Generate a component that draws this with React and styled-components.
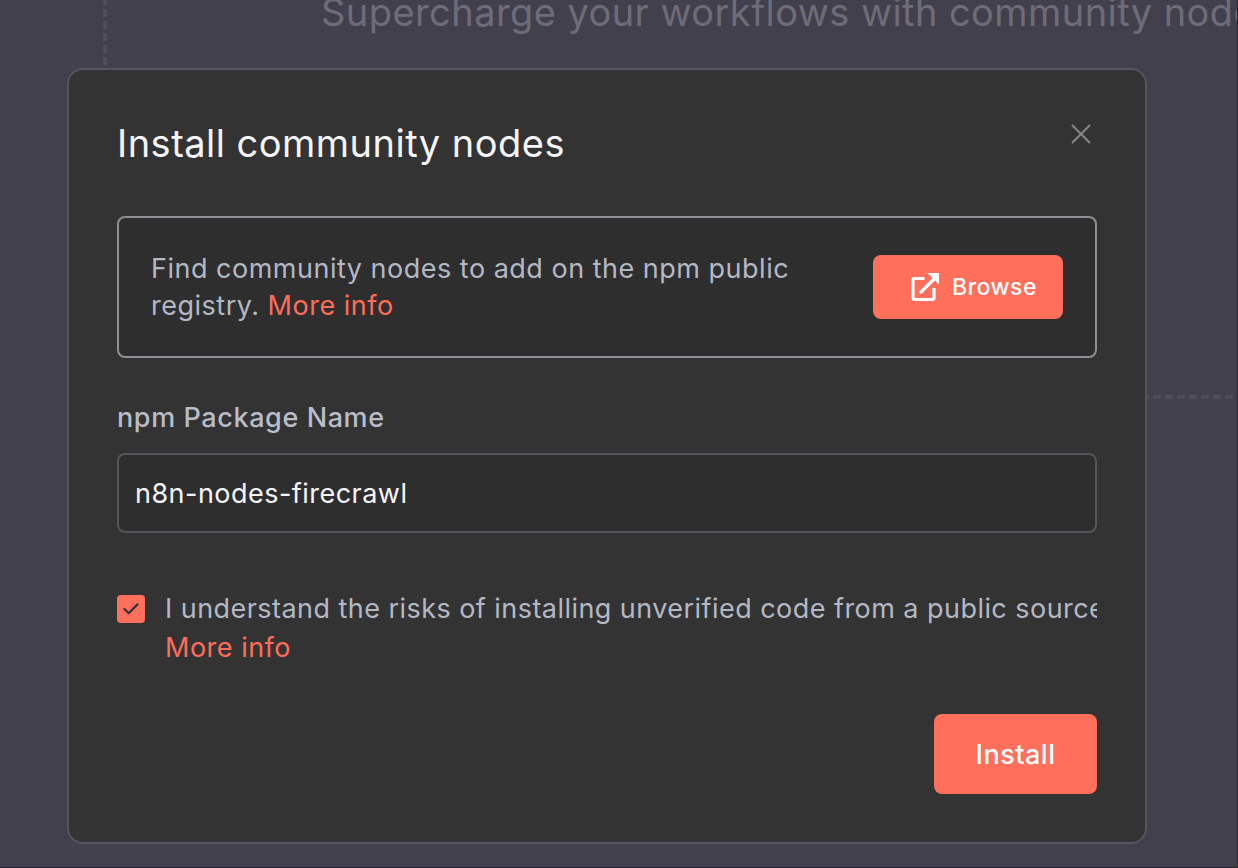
import styled, { createGlobalStyle } from 'styled-components';

const GlobalStyle = createGlobalStyle`
    html, body {
        margin: 0;
        padding: 0;
        height: 100%;
        background: #42404c;
        font-family: Inter, "Liberation Sans", sans-serif;
    }
`;

const Page = styled.div`
    position: relative;
    width: 1238px;
    height: 868px;
    overflow: hidden;
    box-sizing: border-box;
    background: #42404c;
    border-right: 1px solid #26252c;
    border-bottom: 1px solid #26252c;
    padding: 68px 0 0 67px;
`;

const Tagline = styled.div`
    position: absolute;
    left: 321px;
    top: -13px;
    font-size: 38px;
    line-height: 50px;
    letter-spacing: 0.43px;
    color: #6d6c78;
    white-space: nowrap;
`;

const VerticalDash = styled.div`
    position: absolute;
    left: 103px;
    top: -3px;
    width: 4px;
    height: 69px;
    background: repeating-linear-gradient(to bottom, #4e4d5a 0 8px, transparent 8px 12px);
`;

const HorizontalDash = styled.div`
    position: absolute;
    left: 1141px;
    top: 395px;
    width: 97px;
    height: 4px;
    background: repeating-linear-gradient(to right, #4e4d5a 0 8px, transparent 8px 12px);
`;

const Modal = styled.div`
    position: relative;
    box-sizing: border-box;
    width: 1080px;
    height: 776px;
    padding: 48px;
    background: #333333;
    border: 2px solid #55555b;
    border-radius: 16px;
    display: flex;
    flex-direction: column;
`;

const Header = styled.div`
    display: flex;
    align-items: flex-start;
    justify-content: space-between;
    height: 98px;
`;

const Title = styled.h2`
    margin: 0;
    font-size: 38px;
    font-weight: 400;
    line-height: 50px;
    letter-spacing: 0.48px;
    color: #f5f5f9;
`;

const CloseButton = styled.button`
    position: absolute;
    top: 52px;
    right: 52px;
    width: 24px;
    height: 24px;
    padding: 0;
    border: none;
    background: none;
    color: #85858a;
    cursor: pointer;
`;

const InfoBox = styled.div`
    box-sizing: border-box;
    height: 143px;
    padding: 0 32px;
    display: flex;
    align-items: center;
    justify-content: space-between;
    background: #2e2e2e;
    border: 2px solid #8c8f94;
    border-radius: 8px;
`;

const InfoText = styled.p`
    margin: 0;
    width: 660px;
    font-size: 27px;
    line-height: 37px;
    letter-spacing: 0.5px;
    color: #b3b8c5;
`;

const Link = styled.a`
    color: #ff6d5a;
    text-decoration: none;
    letter-spacing: 0.5px;
`;

const BrowseButton = styled.button`
    box-sizing: border-box;
    width: 190px;
    height: 64px;
    padding: 0 0 0 12px;
    display: flex;
    align-items: center;
    justify-content: center;
    gap: 13px;
    border: none;
    border-radius: 8px;
    background: #ff6f5c;
    color: #fff;
    font-family: inherit;
    font-size: 23px;
    font-weight: 500;
    letter-spacing: 0.5px;
    cursor: pointer;
`;

const Label = styled.label`
    display: block;
    margin-top: 41px;
    font-size: 27px;
    font-weight: 500;
    line-height: 37px;
    letter-spacing: 0.6px;
    color: #b9bdc9;
`;

const Input = styled.input`
    display: block;
    box-sizing: border-box;
    width: 100%;
    height: 80px;
    margin-top: 17px;
    padding: 0 16px;
    background: #2e2e2e;
    border: 2px solid #55555b;
    border-radius: 8px;
    outline: none;
    color: #f5f5f9;
    font-family: inherit;
    font-size: 27px;
    letter-spacing: 0.47px;
`;

const Consent = styled.div`
    display: flex;
    align-items: flex-start;
    gap: 20px;
    margin-top: 56px;
`;

const CheckBox = styled.span`
    flex: none;
    display: flex;
    align-items: center;
    justify-content: center;
    width: 28px;
    height: 28px;
    margin-top: 6px;
    border-radius: 4px;
    background: #ff6f5c;
    color: #333;
`;

const ConsentText = styled.div`
    flex: 1;
    min-width: 0;
    overflow: hidden;
    font-size: 27px;
    line-height: 39px;
    letter-spacing: 0.45px;
    color: #b3b8c5;
`;

const ConsentLine = styled.div`
    white-space: nowrap;
`;

const Footer = styled.div`
    display: flex;
    justify-content: flex-end;
    margin-top: 47px;
`;

const InstallButton = styled.button`
    width: 163px;
    height: 80px;
    border: none;
    border-radius: 8px;
    background: #ff6f5c;
    color: #fff;
    font-family: inherit;
    font-size: 27px;
    font-weight: 500;
    letter-spacing: 0.5px;
    cursor: pointer;
`;

function ExternalIcon() {
    return (
        <svg width="28" height="28" viewBox="0 0 28 28" fill="none" stroke="currentColor" strokeWidth="3.2">
            <path d="M13.5 5.5H3.5a1.5 1.5 0 0 0-1.5 1.5v18a1.5 1.5 0 0 0 1.5 1.5h18a1.5 1.5 0 0 0 1.5-1.5V15" />
            <path d="M10 19L24 5" strokeLinecap="round" strokeWidth="3.4" />
            <path d="M16.5 0H28v11.5z" fill="currentColor" stroke="none" />
        </svg>
    );
}

function App() {
    return (
        <Page>
            <GlobalStyle />
            <Tagline>Supercharge your workflows with community nodes!</Tagline>
            <VerticalDash />
            <HorizontalDash />
            <Modal>
                <Header>
                    <Title>Install community nodes</Title>
                    <CloseButton aria-label="Close">
                        <svg width="24" height="24" viewBox="0 0 24 24" fill="none" stroke="currentColor" strokeWidth="2">
                            <path d="M3 3l18 18M21 3L3 21" />
                        </svg>
                    </CloseButton>
                </Header>
                <InfoBox>
                    <InfoText>
                        Find community nodes to add on the npm public registry. <Link href="#">More info</Link>
                    </InfoText>
                    <BrowseButton>
                        <ExternalIcon />
                        Browse
                    </BrowseButton>
                </InfoBox>
                <Label>npm Package Name</Label>
                <Input defaultValue="n8n-nodes-firecrawl" />
                <Consent>
                    <CheckBox>
                        <svg width="16" height="12" viewBox="0 0 16 12" fill="none" stroke="currentColor" strokeWidth="2.2" strokeLinecap="round" strokeLinejoin="round">
                            <path d="M1.5 6l4.2 4.2 8.8-8.8" />
                        </svg>
                    </CheckBox>
                    <ConsentText>
                        <ConsentLine>I understand the risks of installing unverified code from a public source.</ConsentLine>
                        <Link href="#">More info</Link>
                    </ConsentText>
                </Consent>
                <Footer>
                    <InstallButton>Install</InstallButton>
                </Footer>
            </Modal>
        </Page>
    );
}

export default App;
